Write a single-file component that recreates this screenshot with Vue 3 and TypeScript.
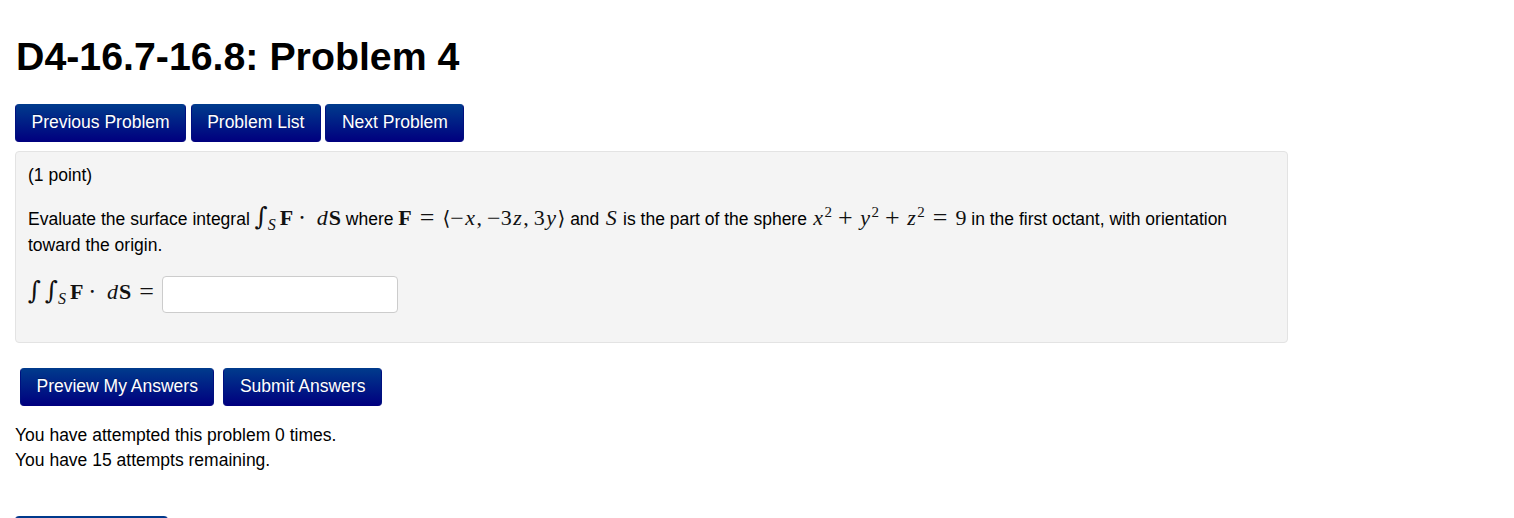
<script setup lang="ts">
const navButtons: string[] = ['Previous Problem', 'Problem List', 'Next Problem']
const submitButtons: string[] = ['Preview My Answers', 'Submit Answers']
</script>

<template>
  <main class="page">
    <h1 class="title">D4-16.7-16.8: Problem 4</h1>
    <nav class="nav">
      <a v-for="b in navButtons" :key="b" class="btn">{{ b }}</a>
    </nav>
    <section class="well">
      <p class="point">(1 point)</p>
      <p class="para">
        Evaluate the surface integral
        <span class="m"><span class="int">∫</span><i class="sub">S</i><b class="bf">F</b><span class="dot">⋅</span><i class="d">d</i><b class="bf">S</b></span>
        where
        <span class="m"><b class="bf">F</b><span class="eq">=</span><span class="ang">⟨</span><span class="sign">−</span><i class="v">x</i>,<span class="sp"></span><span class="sign">−</span>3<i class="v">z</i>,<span class="sp"></span>3<i class="v">y</i><span class="ang">⟩</span></span>
        and <span class="m"><i class="v">S</i></span> is the part of the sphere
        <span class="m"><i class="v">x</i><sup>2</sup><span class="op">+</span><i class="v">y</i><sup>2</sup><span class="op">+</span><i class="v">z</i><sup>2</sup><span class="eq">=</span>9</span>
        in the first octant, with orientation<br />toward the origin.
      </p>
      <div class="answer">
        <span class="m"><span class="int">∫</span><span class="int second">∫</span><i class="sub">S</i><b class="bf">F</b><span class="dot">⋅</span><i class="d">d</i><b class="bf">S</b><span class="eq last-eq">=</span></span>
        <input class="input" type="text" aria-label="Answer" />
      </div>
    </section>
    <div class="actions">
      <a v-for="b in submitButtons" :key="b" class="btn">{{ b }}</a>
    </div>
    <p class="status">You have attempted this problem 0 times.<br />You have 15 attempts remaining.</p>
    <a class="btn last">&nbsp;</a>
  </main>
</template>

<style scoped>
.page {
  height: 518px;
  overflow: hidden;
  box-sizing: border-box;
  padding: 30px 0 0 15px;
  font-family: "Liberation Sans", Arial, sans-serif;
  font-size: 17.5px;
  line-height: 25px;
  color: #000;
  background: #fff;
}
.title {
  margin: 0;
  font-size: 39.3px;
  line-height: 52px;
  font-weight: 700;
  color: #000;
  padding-left: 1px;
}
.nav {
  display: flex;
  gap: 4.5px;
  margin-top: 22px;
}
.btn {
  display: block;
  box-sizing: border-box;
  height: 38px;
  padding: 0 15.5px;
  line-height: 35px;
  color: #fff;
  font-size: 17.5px;
  border: 1px solid;
  border-color: #003a8c #00107f #00007f;
  border-radius: 4px;
  background: linear-gradient(to bottom, #003a8c, #00007f);
  text-shadow: 0 -1px 0 rgba(0, 0, 0, 0.25);
}
.well {
  box-sizing: border-box;
  width: 1273px;
  height: 192px;
  margin-top: 9px;
  padding: 11px 12px;
  background: #f4f4f4;
  border: 1px solid #e3e3e3;
  border-radius: 4px;
}
.point { margin: 0 0 18px; }
.para { margin: 0; width: 1215px; line-height: 26px; }
.m {
  font-family: "Liberation Serif", "DejaVu Serif", serif;
  font-size: 22px;
  line-height: 0;
  color: #111;
  white-space: nowrap;
}
.m sup { font-size: 15px; line-height: 0; vertical-align: 8px; }
.bf { font-weight: 700; }
.v { margin: 0 1.5px; }
.int { font-family: "DejaVu Serif", serif; font-size: 25px; line-height: 0; }
.second { margin-left: 4px; }
.sub { font-size: 16px; vertical-align: -5px; line-height: 0; margin-right: 4px; }
.dot { margin: 0 11px 0 5px; }
.d { margin-right: 1px; }
.eq { font-size: 26px; line-height: 0; margin: 0 8px; vertical-align: -1px; }
.op { font-size: 26px; line-height: 0; margin: 0 6px; vertical-align: -1px; }
.sign { font-size: 24px; line-height: 0; vertical-align: -1px; }
.sp { display: inline-block; width: 5px; }
.ang { font-family: "DejaVu Sans", serif; font-size: 20px; line-height: 0; }
.answer {
  display: flex;
  align-items: center;
  margin-top: 18px;
}
.last-eq { margin-right: 8px; }
.input {
  box-sizing: border-box;
  width: 236px;
  height: 37px;
  border: 1px solid #ccc;
  border-radius: 4px;
  background: #fff;
}
.actions {
  display: flex;
  gap: 9px;
  margin: 25px 0 0 5px;
}
.status { margin: 17px 0 0; }
.last { width: 153px; margin-top: 43px; }
</style>
